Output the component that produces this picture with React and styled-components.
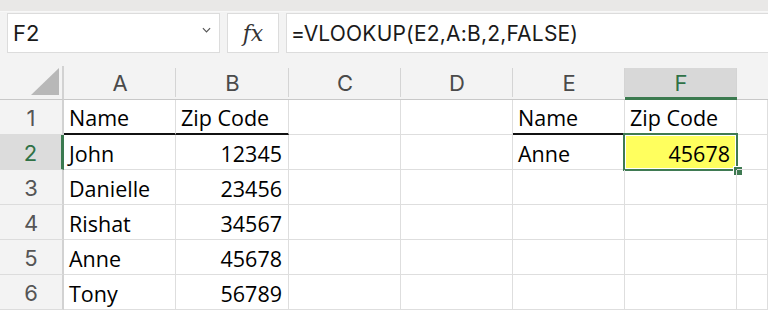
import React from 'react';
import styled, { createGlobalStyle } from 'styled-components';

const GlobalStyle = createGlobalStyle`
  html, body {
    margin: 0;
    padding: 0;
    background: #ffffff;
    overflow: hidden;
  }
`;

const COLUMNS = ['A', 'B', 'C', 'D', 'E', 'F'];
const WIDTHS = [112, 113, 112, 112, 112, 112];

const rows = [
  { n: 1, cells: [{ v: 'Name', u: true }, { v: 'Zip Code', u: true }, {}, {}, { v: 'Name', u: true }, { v: 'Zip Code', u: true }] },
  { n: 2, cells: [{ v: 'John' }, { v: '12345', num: true }, {}, {}, { v: 'Anne' }, { v: '45678', num: true, sel: true }] },
  { n: 3, cells: [{ v: 'Danielle' }, { v: '23456', num: true }, {}, {}, {}, {}] },
  { n: 4, cells: [{ v: 'Rishat' }, { v: '34567', num: true }, {}, {}, {}, {}] },
  { n: 5, cells: [{ v: 'Anne' }, { v: '45678', num: true }, {}, {}, {}, {}] },
  { n: 6, cells: [{ v: 'Tony' }, { v: '56789', num: true }, {}, {}, {}, {}] },
];

function App() {
  return (
    <Page>
      <GlobalStyle />
      <TopStrip />
      <FormulaBar>
        <NameBox>
          <span>F2</span>
          <Chevron viewBox="0 0 10 6">
            <path d="M1 1 L5 5 L9 1" fill="none" stroke="#555" strokeWidth="1.3" />
          </Chevron>
        </NameBox>
        <FxBox>
          <i>fx</i>
        </FxBox>
        <FormulaInput>=VLOOKUP(E2,A:B,2,FALSE)</FormulaInput>
      </FormulaBar>
      <Sheet>
        <Corner>
          <svg width="28" height="27" viewBox="0 0 28 27">
            <polygon points="28,0 28,27 0,27" fill="#b8b8b8" />
          </svg>
        </Corner>
        {COLUMNS.map((c) => (
          <ColHeader key={c} $active={c === 'F'}>
            <span>{c}</span>
          </ColHeader>
        ))}
        <ColHeader $last />
        {rows.map((r) => (
          <React.Fragment key={r.n}>
            <RowHeader $active={r.n === 2}>{r.n}</RowHeader>
            {r.cells.map((cell, i) => (
              <Cell key={i} $num={cell.num} $underline={cell.u}>
                {cell.sel && (
                  <Selection>
                    <FillHandle />
                  </Selection>
                )}
                <CellText>{cell.v}</CellText>
              </Cell>
            ))}
            <Cell />
          </React.Fragment>
        ))}
      </Sheet>
    </Page>
  );
}

const Page = styled.div`
  width: 768px;
  height: 319px;
  overflow: hidden;
  background: #ffffff;
`;

const TopStrip = styled.div`
  height: 11px;
  background: #e9e8e7;
  border-bottom: 1px solid #f8f8f8;
`;

// name box / fx / formula
const FormulaBar = styled.div`
  display: flex;
  align-items: flex-start;
  gap: 7px;
  height: 54px;
  padding: 1px 0 0 7px;
  background: #f3f3f3;
  box-sizing: border-box;
`;

const BarBox = styled.div`
  height: 40px;
  box-sizing: border-box;
  background: #ffffff;
  border: 1px solid #dcdcdc;
  display: flex;
  align-items: center;
  font-family: Inter, 'Open Sans', sans-serif;
  font-size: 21px;
  color: #1a1a1a;
`;

const NameBox = styled(BarBox)`
  width: 213px;
  padding: 0 8px 0 5px;
  justify-content: space-between;
  font-size: 22px;
`;

const Chevron = styled.svg`
  width: 9px;
  height: 6px;
  margin-top: -6px;
`;

const FxBox = styled(BarBox)`
  width: 52px;
  justify-content: center;

  i {
    font-family: 'DejaVu Serif', 'Liberation Serif', serif;
    font-size: 22px;
    color: #333;
  }
`;

const FormulaInput = styled(BarBox)`
  flex: 1;
  border-right: none;
  padding-left: 4px;
  letter-spacing: 0.2px;
`;

// grid
const Sheet = styled.div`
  display: grid;
  grid-template-columns: 64px ${WIDTHS.map((w) => `${w}px`).join(' ')} 1fr;
  grid-template-rows: 34px repeat(6, 35px);
  background: #ffffff;
`;

const Corner = styled.div`
  background: #f3f3f3;
  border-bottom: 1px solid #c8c8c8;
  border-right: 2px solid #d2d2d2;
  display: flex;
  align-items: flex-end;
  justify-content: flex-end;
  padding: 0 3px 4px 0;
  box-sizing: border-box;
`;

const ColHeader = styled.div`
  position: relative;
  box-sizing: border-box;
  background: #f3f3f3;
  border-bottom: ${(p) => (p.$active ? '3px solid #3b7a4f' : '1px solid #c8c8c8')};
  display: flex;
  align-items: center;
  justify-content: center;
  font-family: Inter, 'Open Sans', sans-serif;
  font-size: 22px;
  color: ${(p) => (p.$active ? '#2f7146' : '#4a4a4a')};
  padding-top: ${(p) => (p.$active ? '2px' : '0')};

  &::before {
    content: '';
    display: ${(p) => (p.$active ? 'block' : 'none')};
    position: absolute;
    left: 0;
    right: 0;
    top: 2px;
    bottom: 0;
    background: #d8d8d8;
  }

  &::after {
    content: '';
    display: ${(p) => (p.$last ? 'none' : 'block')};
    position: absolute;
    right: 0;
    top: 2px;
    bottom: 2px;
    width: 1px;
    background: #d4d4d4;
  }

  span {
    position: relative;
  }
`;

const RowHeader = styled.div`
  box-sizing: border-box;
  background: ${(p) => (p.$active ? '#dcdcdc' : '#f3f3f3')};
  border-right: ${(p) => (p.$active ? '3px solid #3b7a4f' : '2px solid #d2d2d2')};
  border-bottom: 1px solid #dcdcdc;
  display: flex;
  align-items: flex-end;
  justify-content: center;
  padding: 0 0 3px 0;
  font-family: Inter, 'Open Sans', sans-serif;
  font-size: 22px;
  color: ${(p) => (p.$active ? '#2f7146' : '#555555')};
`;

const Cell = styled.div`
  position: relative;
  box-sizing: border-box;
  border-right: 1px solid #dedede;
  border-bottom: ${(p) => (p.$underline ? '2px solid #111' : '1px solid #dedede')};
  display: flex;
  align-items: flex-end;
  justify-content: ${(p) => (p.$num ? 'flex-end' : 'flex-start')};
  padding: ${(p) => (p.$num ? '0 6px 2px 0' : '0 0 2px 5px')};
  font-family: 'Open Sans', Lato, sans-serif;
  font-size: 21.5px;
  color: #000;
`;

const CellText = styled.span`
  position: relative;
  line-height: 27px;
`;

// selected cell overlay
const Selection = styled.div`
  position: absolute;
  left: -2px;
  top: -2px;
  right: -2px;
  bottom: -2px;
  border: 2px solid #3f7a52;
  background: #ffff5e;
  box-shadow: inset 0 0 0 1px #ffffff;
`;

const FillHandle = styled.div`
  position: absolute;
  right: -7px;
  bottom: -7px;
  width: 8px;
  height: 8px;
  background: #3f7a52;
  border: 1px solid #ffffff;
`;

export default App;
